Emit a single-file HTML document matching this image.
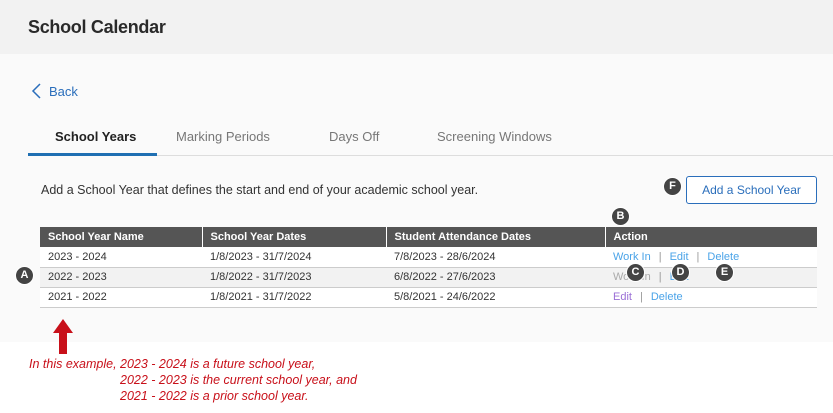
<!DOCTYPE html>
<html><head><style>
*{margin:0;padding:0;box-sizing:border-box}
body{width:833px;height:413px;background:#fff;font-family:"Liberation Sans",sans-serif;position:relative;overflow:hidden}
.hdr{position:absolute;left:0;top:0;width:833px;height:54px;background:#f2f2f2}
.hdr h1{position:absolute;left:28px;top:17px;font-size:18px;font-weight:bold;color:#2a2a2a;letter-spacing:-0.3px}
.panel{position:absolute;left:0;top:54px;width:833px;height:288px;background:#fafafa}
.abs{position:absolute}
.back{left:33px;top:84px;color:#2a6ebb;font-size:13px}
.tab{top:129px;font-size:13px;color:#777}
.line{left:28px;top:155px;width:805px;height:1px;background:#ddd}
.ul{left:28px;top:153px;width:129px;height:3px;background:#1f6fb2}
.desc{left:41px;top:183px;font-size:12.5px;color:#333}
.btn{left:686px;top:176px;width:131px;height:28px;border:1px solid #2a6ebb;border-radius:3px;background:#fff;color:#2a6ebb;font-size:12px;text-align:center;line-height:26px}
table{position:absolute;left:40px;top:227px;width:777px;border-collapse:collapse;font-size:11px}
th{background:#555;color:#fff;text-align:left;height:20px;padding-left:8px;font-weight:bold;border-right:1px solid #fff}
th:last-child{border-right:none}
td{height:20px;padding-left:8px;color:#333;border-bottom:1px solid #ccc;background:#fff}
tr.g td{background:#f2f2f2}
.l{color:#4aa3e8}.s{color:#999;margin:0 8px}
.b{position:absolute;width:19px;height:19px;border-radius:50%;background:#444;color:#fff;font-size:11px;font-weight:bold;text-align:center;line-height:17px;border:1px solid #fff}
.note{font-style:italic;color:#c8101a;font-size:12.5px;position:absolute;line-height:16px}
</style></head><body>
<div class="hdr"><h1>School Calendar</h1></div>
<div class="panel"></div>
<svg class="abs" style="left:31px;top:83px" width="12" height="16"><path d="M9 1 L2 8 L9 15" stroke="#2a6ebb" stroke-width="1.5" fill="none"/></svg>
<div class="abs back" style="left:49px">Back</div>
<div class="abs tab" style="left:55px;color:#222;font-weight:bold">School Years</div>
<div class="abs tab" style="left:176px">Marking Periods</div>
<div class="abs tab" style="left:329px">Days Off</div>
<div class="abs tab" style="left:437px">Screening Windows</div>
<div class="abs line"></div><div class="abs ul"></div>
<div class="abs desc">Add a School Year that defines the start and end of your academic school year.</div>
<div class="abs btn">Add a School Year</div>
<table>
<tr><th style="width:162px">School Year Name</th><th style="width:184px">School Year Dates</th><th style="width:219px">Student Attendance Dates</th><th>Action</th></tr>
<tr><td>2023 - 2024</td><td>1/8/2023 - 31/7/2024</td><td>7/8/2023 - 28/6/2024</td><td><span class="l">Work In</span><span class="s">|</span><span class="l">Edit</span><span class="s">|</span><span class="l">Delete</span></td></tr>
<tr class="g"><td>2022 - 2023</td><td>1/8/2022 - 31/7/2023</td><td>6/8/2022 - 27/6/2023</td><td><span style="color:#aaa">Work In</span><span class="s">|</span><span class="l">Edit</span></td></tr>
<tr><td>2021 - 2022</td><td>1/8/2021 - 31/7/2022</td><td>5/8/2021 - 24/6/2022</td><td><span class="l" style="color:#9b6fd6">Edit</span><span class="s">|</span><span class="l">Delete</span></td></tr>
</table>
<div class="b" style="left:15px;top:266px">A</div>
<div class="b" style="left:611px;top:207px">B</div>
<div class="b" style="left:626px;top:263px">C</div>
<div class="b" style="left:671px;top:263px">D</div>
<div class="b" style="left:715px;top:263px">E</div>
<div class="b" style="left:663px;top:177px">F</div>
<svg class="abs" style="left:52px;top:319px" width="22" height="36"><polygon points="11,0 21,14 15,14 15,35 7,35 7,14 1,14" fill="#c8101a"/></svg>
<div class="note" style="left:29px;top:356px">In this example, 2023 - 2024 is a future school year,</div>
<div class="note" style="left:120px;top:372px">2022 - 2023 is the current school year, and</div>
<div class="note" style="left:120px;top:388px">2021 - 2022 is a prior school year.</div>
</body></html>
